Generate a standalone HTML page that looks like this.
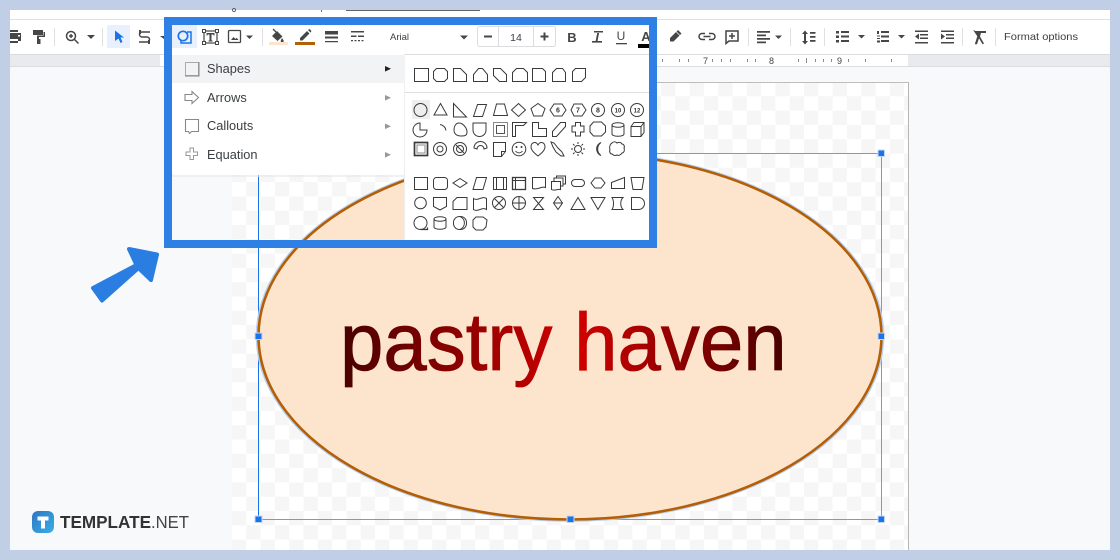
<!DOCTYPE html>
<html><head><meta charset="utf-8"><style>
html,body{margin:0;padding:0;width:1120px;height:560px;overflow:hidden;background:#c0cfe5}
svg{position:absolute;left:0;top:0;display:block}
text{font-family:"Liberation Sans",Arial,sans-serif}
.i{fill:none;stroke:#444746;stroke-width:1.5}
.f{fill:#444746;stroke:none}
.s{fill:none;stroke:#3a3a3a;stroke-width:1}
g.s{filter:blur(.3px)}
.d{stroke:#e0e0e0;stroke-width:1}
.m{font-size:12.8px;fill:#3c4043}
#wm{position:absolute;left:340px;top:293px;width:450px;height:100px;line-height:100px;font-family:"Liberation Sans",Arial,sans-serif;font-size:78px;white-space:nowrap;color:transparent;-webkit-text-stroke:.8px transparent;background:linear-gradient(90deg,#480000 0,#d20000 236px,#480000 447px);-webkit-background-clip:text;background-clip:text;transform-origin:0 77px;transform:scaleY(1.05)}
</style></head><body>
<svg width="1120" height="560" viewBox="0 0 1120 560" xmlns="http://www.w3.org/2000/svg">
<defs>
<pattern id="ck" x="232" y="82" width="28.6" height="28.6" patternUnits="userSpaceOnUse">
<rect width="28.6" height="28.6" fill="#fff"/>
<rect x="0" y="0" width="14.3" height="14.3" fill="#f6f6f6"/>
<rect x="14.3" y="14.3" width="14.3" height="14.3" fill="#f6f6f6"/>
</pattern>
<linearGradient id="lg" x1="0" y1="0" x2="1" y2="1"><stop offset="0" stop-color="#2f76c2"/><stop offset="1" stop-color="#38aee6"/></linearGradient>
</defs>
<rect x="0" y="0" width="1120" height="560" fill="#c0cfe5"/>
<rect x="10" y="10" width="1100" height="540" fill="#f8f9fb"/>
<!-- toolbar -->
<rect x="10" y="10" width="1100" height="44" fill="#fff"/>
<rect x="10" y="19" width="1100" height="1" fill="#e0e0e0"/>
<rect x="10" y="54" width="1100" height="1" fill="#dadce0"/>
<rect x="346" y="10" width="134" height="1" fill="#666"/>
<circle cx="234" cy="10" r="1.6" fill="none" stroke="#666"/><rect x="321" y="10" width="1" height="2" fill="#b45f06"/>
<rect x="10" y="55" width="1100" height="11" fill="#e8eaed"/>
<rect x="160" y="55" width="748" height="11" fill="#fff"/>
<rect x="10" y="66" width="1100" height="1" fill="#dadce0"/>
<g fill="#888"><rect x="662" y="59" width="1" height="3"/><rect x="679" y="59" width="1" height="3"/><rect x="688" y="59" width="1" height="3"/>
<rect x="712" y="59" width="1" height="3"/><rect x="721" y="59" width="1" height="3"/><rect x="730" y="59" width="1" height="3"/><rect x="747" y="59" width="1" height="3"/><rect x="755" y="59" width="1" height="3"/>
<rect x="798" y="59" width="1" height="3"/><rect x="806" y="58" width="1" height="5"/><rect x="815" y="59" width="1" height="3"/><rect x="823" y="59" width="1" height="3"/><rect x="831" y="59" width="1" height="3"/>
<rect x="848" y="59" width="1" height="3"/><rect x="865" y="59" width="1" height="3"/><rect x="891" y="59" width="1" height="3"/></g>
<g font-size="9" fill="#444"><text x="703" y="64">7</text><text x="769" y="64">8</text><text x="837" y="64">9</text></g>
<!-- canvas -->
<rect x="232" y="82" width="676" height="468" fill="url(#ck)"/>
<rect x="232" y="82" width="677" height="1" fill="#bdbdbd"/>
<rect x="908" y="82" width="1" height="468" fill="#b5b5b5"/>
<!-- selection -->
<rect x="258.5" y="153.5" width="623" height="366" fill="none" stroke="#6f9be0" stroke-width="1"/>
<rect x="258" y="153" width="1" height="367" fill="#1a73e8"/>
<ellipse cx="570" cy="336" rx="313" ry="184.5" fill="none" stroke="#b7cff2" stroke-width="2.5"/>
<ellipse cx="570" cy="336" rx="311.5" ry="183.5" fill="#fde4cd" stroke="#b45f06" stroke-width="2.6"/>
<g fill="#1a73e8" stroke="#c4d8f6" stroke-width="1">
<rect x="878" y="150" width="6.5" height="6.5"/><rect x="255" y="333" width="7" height="6.5"/><rect x="878" y="333" width="6.5" height="6.5"/>
<rect x="255" y="516" width="7" height="6.5"/><rect x="567" y="516" width="7" height="6.5"/><rect x="878" y="516" width="6.5" height="6.5"/></g>
<!-- toolbar left icons -->
<g>
<path class="f" d="M10 33h11v8h-3v-2h-8zM10 30h8v2h-8zM10 41h8v2h-8z"/><rect x="18" y="35" width="2" height="1.5" fill="#fff"/>
<path class="f" d="M33 30h10v5h-10zM43.500 32h1.500v5h-6v2h1.500v5h-3.500v-8.500h6.500z"/>
<rect x="54" y="28" width="1" height="18" fill="#e0e0e0"/>
<circle cx="71" cy="36" r="4.500" class="i"/><path class="i" d="M74.500 39.500l4 4M69 36h4M71 34v4" stroke-width="1.200"/>
<path class="f" d="M87 35h8l-4 4z"/>
<rect x="102" y="28" width="1" height="18" fill="#e0e0e0"/>
<rect x="107" y="25" width="23" height="23" rx="1" fill="#e8f0fe"/>
<path d="M115 30.500l9 7h-3.500l2 4.500-2 1-2-4.500-3.500 2.500z" fill="#1a73e8"/>
<path class="i" d="M150 32h-8a2.500 2.500 0 0 0 0 5h5a2.500 2.500 0 0 1 0 5h-8" stroke-width="1.700"/><path class="f" d="M139 30h2v4h-2zM148 40h2v4h-2z"/>
<path class="f" d="M160 36h4v3z"/>
</g>
<!-- right toolbar icons -->
<path class="f" d="M670 38l6-6 3.500 3.500-6 6h-3.500zM676.500 31.500l1.500-1.500 3.500 3.500-1.500 1.500z"/>
<path class="i" d="M705 33.500h-3a3 3 0 0 0 0 6h3M709 33.500h3a3 3 0 0 1 0 6h-3M703.500 36.500h7" transform="translate(0,0)"/>
<path class="i" d="M726 31h12v10h-9l-3 2.500z" stroke-width="1.100"/><path class="i" d="M729 36h6M732 33v6" stroke-width="1"/>
<rect x="748" y="28" width="1" height="18" fill="#e0e0e0"/>
<path class="f" d="M757 31h13v1.700h-13zM757 34.500h9v1.700h-9zM757 38h13v1.700h-13zM757 41.500h9v1.700h-9z"/><path class="f" d="M775 35.500h7l-3.500 3.500z"/>
<rect x="790" y="28" width="1" height="18" fill="#e0e0e0"/>
<path class="f" d="M805 30.500l3 3.500h-2v7h2l-3 3.500-3-3.500h2v-7h-2zM810 32h5.500v1.700h-5.500zM810 36h5.500v1.700h-5.500zM810 40h5.500v1.700h-5.500z"/>
<rect x="824" y="28" width="1" height="18" fill="#e0e0e0"/>
<path class="f" d="M836 31h3v2.500h-3zM836 35.500h3v2.500h-3zM836 40h3v2.500h-3zM841 31h8v2h-8zM841 35.500h8v2h-8zM841 40h8v2h-8z"/><path class="f" d="M858 35h7l-3.500 3.500z"/>
<path class="f" d="M877 31h2v3h-2zM877 35.500h3v1h-3zM877 38h3v1h-3zM877 40.500h3v2h-3zM881 31h8v2h-8zM881 35.500h8v2h-8zM881 40h8v2h-8z"/><path class="f" d="M898 35h7l-3.500 3.500z"/>
<path class="f" d="M915 30.500h13v1.500h-13zM920 34h8v1.500h-8zM920 37.500h8v1.500h-8zM915 42h13v1.500h-13zM919 33.500v6l-4-3z"/>
<path class="f" d="M941 30.500h13v1.500h-13zM946 34h8v1.500h-8zM946 37.500h8v1.500h-8zM941 42h13v1.500h-13zM941 33.500v6l4-3z"/>
<rect x="962" y="28" width="1" height="18" fill="#e0e0e0"/>
<path class="f" d="M974 31h12v2h-5l-1 3.500 4 7-1.500 .8-3.500-6-2 6h-2.200l2.500-8-4-6h2z"/>
<rect x="995" y="28" width="1" height="18" fill="#e0e0e0"/>
<text x="1004" y="40" font-size="10.500" fill="#3c4043" textLength="74" lengthAdjust="spacingAndGlyphs">Format options</text>
<!-- arrow -->
<path d="M129 249L157 254.500L151 280L138.500 268L102 300.500L93 288L136.500 265Z" fill="#2a7de1" stroke="#2a7de1" stroke-width="4" stroke-linejoin="round"/>
<!-- frame interior -->
<rect x="172" y="25" width="477" height="23" fill="#fff"/>
<rect x="405" y="54" width="244" height="186" fill="#fff"/>
<rect x="405" y="54" width="244" height="1" fill="#dadce0"/>
<rect x="405" y="92" width="244" height="1" fill="#e0e0e0"/>
<rect x="172" y="48" width="233" height="128" fill="#e6e7ea" opacity=".6" transform="translate(0,1)"/>
<rect x="172" y="48" width="233" height="127" rx="3" fill="#fff"/>
<rect x="404" y="54" width="1" height="186" fill="#eee"/>
<rect x="172" y="55" width="233" height="28" fill="#f1f3f4"/>
<rect x="172" y="25" width="25" height="23" fill="#e8f0fe"/>
<!-- frame toolbar icons -->
<circle cx="183" cy="36" r="4.700" fill="none" stroke="#1a73e8" stroke-width="1.700"/><path d="M187 32h4v11h-10v-3" fill="none" stroke="#1a73e8" stroke-width="1.500"/>
<rect x="204" y="31" width="13" height="12" fill="none" stroke="#444746" stroke-width="1.200"/>
<g fill="#fff" stroke="#444746"><rect x="202.500" y="29.500" width="3" height="3"/><rect x="215.500" y="29.500" width="3" height="3"/><rect x="202.500" y="41.500" width="3" height="3"/><rect x="215.500" y="41.500" width="3" height="3"/></g>
<path class="f" d="M206.500 33h8v2.500h-1v-1h-2v6h1v1h-4v-1h1v-6h-2v1h-1z"/>
<rect x="228.500" y="30.500" width="12" height="12" rx="1" fill="none" stroke="#444746" stroke-width="1.300"/><path class="f" d="M231 40l2.500-3 2 2 1.200-1.300 1.800 2.300z"/>
<path class="f" d="M246 35.500h7l-3.500 3.500z"/>
<rect x="262" y="28" width="1" height="18" fill="#e0e0e0"/>
<path class="f" d="M277 31l5.500 5.500-5 4.500-5.500-5zM282 38c1 1.500 1.700 2.300 1.700 3a1.500 1.500 0 0 1-3 0c0-.7 .6-1.500 1.300-3z"/><path d="M273 29l3 3" stroke="#444746" stroke-width="1.300"/>
<rect x="269" y="42" width="19" height="3" fill="#fce5cd"/>
<path class="f" d="M300 38l7-7 2.500 2.500-7 7h-2.500zM308 30l1.500-1 2 2-1 1.500z"/>
<rect x="295" y="42" width="20" height="3" fill="#b45f06"/>
<path class="f" d="M325 31h13v3.500h-13zM325 36.500h13v2h-13zM325 41h13v1.200h-13z"/>
<path class="f" d="M351 31h13v1.500h-13zM351 35.500h5.500v1.500h-5.500zM358 35.500h6v1.500h-6zM351 40h2v1.200h-2zM354.500 40h2v1.200h-2zM358 40h2v1.200h-2zM361.500 40h2v1.200h-2z"/>
<text x="390" y="40" font-size="9.500" fill="#3c4043">Arial</text>
<path class="f" d="M460 35.500h8l-4 4z"/>
<rect x="477.500" y="26.500" width="78" height="20" rx="2" fill="#fff" stroke="#dadce0"/>
<rect x="498" y="27" width="1" height="19" fill="#dadce0"/><rect x="533" y="27" width="1" height="19" fill="#dadce0"/>
<rect x="484" y="35.500" width="8" height="2" fill="#444746"/><path class="f" d="M540.500 35.500h3v-3h2v3h3v2h-3v3h-2v-3h-3z"/>
<text x="516" y="41" font-size="10.500" fill="#3c4043" text-anchor="middle">14</text>
<text x="572" y="42" font-size="13" font-weight="bold" fill="#444746" text-anchor="middle">B</text>
<text x="597" y="42" font-size="13" font-weight="bold" font-style="italic" fill="#444746" text-anchor="middle">I</text>
<path class="f" d="M592 41h10v1.600h-10zM594 31h9v1.500h-9z"/>
<text x="621" y="40" font-size="12" fill="#444746" text-anchor="middle">U</text><rect x="616" y="43" width="11" height="1.300" fill="#444746"/>
<text x="646" y="41" font-size="13" font-weight="bold" fill="#444746" text-anchor="middle">A</text>
<rect x="638" y="44" width="11" height="4" fill="#000"/>
<!-- menu -->
<rect x="185.500" y="62.500" width="13" height="13" fill="none" stroke="#aaa" stroke-width="1"/><path d="M185 76h14V62" fill="none" stroke="#888"/>
<text class="m" x="207" y="73">Shapes</text>
<path d="M185 94.500h7v-3l6.500 6-6.500 6v-3h-7z" fill="none" stroke="#888" stroke-width="1.100"/>
<text class="m" x="207" y="102">Arrows</text>
<path d="M185.500 119.500h13v12h-7l-2 2-1-2h-3z" fill="none" stroke="#888" stroke-width="1.100"/>
<text class="m" x="207" y="130">Callouts</text>
<path d="M190 148h3.500v4h4v3.500h-4v4h-3.500v-4h-4v-3.500h4z" fill="none" stroke="#999" stroke-width="1"/>
<text class="m" x="207" y="159">Equation</text>
<path d="M385 66l6 2.800-6 2.800z" fill="#222"/>
<path d="M385 95l6 2.800-6 2.800zM385 123.500l6 2.800-6 2.800zM385 152l6 2.800-6 2.800z" fill="#999"/>
<!-- shape row 1 -->
<g class="s">
<path d="M414.500 68.500h14v13h-14z"/>
<path d="M436.500 68.500h8l3 3v7l-3 3h-8l-3-3v-7z" transform="translate(0,0)"/>
<path d="M453.500 68.500h7l6 6v7h-13z"/>
<path d="M473.500 81.500v-7l5-6h4l5 6v7z"/>
<path d="M493.500 68.500h7l6 6v7h-7l-6-6z"/>
<path d="M512.500 81.500v-9l4-4h7l4 4v9z"/>
<path d="M532.500 68.500h10l3 3v10h-13z"/>
<path d="M552.500 81.500v-9l4-4h6l3 4v9z"/>
<path d="M572.500 71.500l3-3h10v9l-4 4h-9z"/>
</g>
<rect x="412" y="100" width="18" height="19" fill="#eee"/>
<!-- shape row 2 -->
<g class="s">
<circle cx="420.500" cy="110" r="6.500"/>
<path d="M440.500 103.500l6.500 11.500h-13z"/>
<path d="M453.500 103.500l13 13.500h-13z"/>
<path d="M477.500 104.500h9l-4 12h-9z"/>
<path d="M496.500 104h8l3 11.500h-14z"/>
<path d="M518.500 103.500l7 6.500-7 6.500-7-6.500z"/>
<path d="M538 103.500l7 5-2.700 7.500h-8.600l-2.700-7.500z"/>
<path d="M554 104h8l4 6-4 6h-8l-4-6z" transform="translate(0,0)"/>
<path d="M574 104h8l4 6-4 6h-8l-3-6z"/>
<circle cx="598" cy="110" r="6.500"/>
<circle cx="618" cy="110" r="6.500"/>
<circle cx="637" cy="110" r="6.500"/>
</g>
<g font-size="7" font-weight="bold" fill="#333" text-anchor="middle"><text x="558" y="112.500">6</text><text x="578" y="112.500">7</text><text x="598" y="112.500">8</text><text x="618" y="112.500" font-size="6">10</text><text x="637" y="112.500" font-size="6">12</text></g>
<!-- shape row 3 -->
<g class="s">
<path d="M420 123a7 7 0 1 0 7 7h-7z"/>
<path d="M440 124.500a7 7 0 0 1 6 6"/>
<path d="M459 123c4 0 8 5 8 9s-3 4-6 4c-4 0-7-2-7-6s2-7 5-7z"/>
<path d="M486 123v7a6.500 6.500 0 0 1-6.500 6.500a6.500 6.500 0 0 1-6.500-6.500v-7z" transform="translate(0,0)"/>
<rect x="493.500" y="122.500" width="14" height="14" stroke="#888"/><rect x="496.500" y="125.500" width="8" height="8" stroke="#555"/>
<path d="M512.500 136.500v-14h14l-3 3h-8v11z"/>
<path d="M532.500 122.500h6v6h8v8h-14z"/>
<path d="M552.500 136.500v-5l8-9h5v4l-9 10z"/>
<path d="M575.500 122.500h5v3.500h3.500v6h-3.500v4h-5v-4h-3.500v-6h3.500z"/>
<path d="M594 123h8l4 4v6l-4 4h-8l-3.500-4v-6z" transform="translate(-.5,-1)"/>
<path d="M612 125c0-3 12-3 12 0v9c0 3-12 3-12 0zM612 125c0 3 12 3 12 0"/>
<path d="M631 126.500l3-4h10v10l-3 4h-10zM631 126.500h10v10M641 126.500l3-4"/>
</g>
<!-- shape row 4 -->
<g class="s">
<rect x="414.500" y="142.500" width="13" height="13" stroke-width="1.700"/><rect x="417" y="145" width="8" height="8" stroke="#888"/>
<circle cx="440" cy="149" r="6.500"/><circle cx="440" cy="149" r="3"/>
<circle cx="460" cy="149" r="6.500"/><circle cx="460" cy="149" r="3.500"/><path d="M456 145l8 8"/>
<path d="M474 148a6.500 6.500 0 0 1 13 0l-3 1a3.500 3.500 0 0 0-7 0z"/>
<path d="M493.500 142.500h12v9l-4 5h-8zM505.500 151.500h-4v5"/>
<circle cx="519" cy="149" r="6.800"/><circle cx="516.500" cy="147" r=".5"/><circle cx="521.500" cy="147" r=".5"/><path d="M515.500 151c2 2.500 5 2.500 7 0"/>
<path d="M538 156c-4-3-7-6-7-9 0-5 5-6 7-2 2-4 7-3 7 2 0 3-3 6-7 9z"/>
<path d="M551 142l3 1 4 5 4 4 2 4-3 0-5-4-3-5z"/>
<circle cx="578" cy="149" r="3.500"/><path d="M578 142v2M578 154v2M571 149h2M583 149h2M573 144l1.500 1.500M581.500 152.500l1.500 1.500M573 154l1.500-1.500M581.500 145.500l1.500-1.500"/>
<path d="M601 142.500a7 7 0 0 0 0 13a8 8 0 0 1 0-13z"/>
<path d="M612 143c2-2 4-1 5 0 2-1 4-1 5 1 2 0 3 3 2 4 1 2 0 5-2 5-1 2-4 3-5 2-2 1-4 0-5-1-2 0-3-3-2-4-1-3 0-6 2-7z" stroke-dasharray="0"/>
</g>
<!-- shape row 5 -->
<g class="s">
<rect x="414.500" y="177.500" width="13" height="12"/>
<rect x="433.500" y="177.500" width="14" height="12" rx="3"/>
<path d="M460 178.500l7 4.500-7 4.500-7-4.500z" transform="translate(0,0)"/>
<path d="M476.500 177.500h10l-3.500 12h-10z"/>
<rect x="493.500" y="177.500" width="13" height="12"/><path d="M496.500 177.500v12M503.500 177.500v12"/>
<rect x="512.500" y="177.500" width="13" height="12" stroke-width="1.300"/><path d="M515.500 177.500v12M512.500 180.500h13"/>
<path d="M532.500 177.500h13v10c-4-2-7 3-13 1z"/>
<path d="M551.500 181.500h9v8c-3-1-6 2-9 0zM554 181v-3h9v8h-2.500M556.500 178v-2h9v8h-2.500"/>
<rect x="571.500" y="179.500" width="13" height="7" rx="3.500"/>
<path d="M595 178h6l4 5-4 5h-6l-4-5z"/>
<path d="M611.500 188.500h13v-11l-13 5z"/>
<path d="M631 177.500h13l-2 12h-9z"/>
</g>
<!-- shape row 6 -->
<g class="s">
<circle cx="420.500" cy="203" r="5.800"/>
<path d="M433.500 197.500h13v9l-6.500 3.500-6.500-3.500z"/>
<path d="M457 197.500h10v12h-14v-8z"/>
<path d="M473.500 198.500c4 3 9-3 13 0v11c-4-3-9 3-13 0z"/>
<circle cx="499" cy="203" r="6.500"/><path d="M494.500 198.500l9 9M494.500 207.500l9-9"/>
<circle cx="519" cy="203" r="6.500"/><path d="M519 196.500v13M512.500 203h13"/>
<path d="M533.500 197.500h10l-10 12h10z"/>
<path d="M558 196.500l4.500 6.500-4.500 6.500-4.500-6.500zM553.500 203h9"/>
<path d="M578 197.500l7 12h-14z"/>
<path d="M591 197.500h14l-7 12z"/>
<path d="M612 197.500h11c-3 3-3 9 0 12h-11c2-3 2-9 0-12z"/>
<path d="M631.500 197.500h7a6 6 0 0 1 6 6a6 6 0 0 1-6 6h-7z"/>
</g>
<!-- shape row 7 -->
<g class="s">
<circle cx="420.500" cy="223" r="6.500"/><path d="M420.500 229.500h7v-2" stroke-width="1.300"/>
<path d="M434 219c0-3 12-3 12 0v8c0 3-12 3-12 0zM434 219c0 3 12 3 12 0"/>
<rect x="453.500" y="216.500" width="13" height="13" rx="6"/><path d="M460 216.500a7 7 0 0 1 0 13"/>
<path d="M476 217h7l4 3-1 7-3 3h-7l-3-3v-7z"/>
</g>
<!-- blue frame -->
<rect x="168" y="21" width="485" height="223" fill="none" stroke="#2f80e4" stroke-width="8"/>
<!-- logo -->
<rect x="32" y="511" width="22" height="22" rx="6" fill="url(#lg)"/>
<path d="M37.500 516.500h11v4h-3.500v8h-4v-8h-3.500z" fill="#fff"/>
<text x="60" y="528" font-size="17.500" font-weight="bold" fill="#333" textLength="91" lengthAdjust="spacingAndGlyphs">TEMPLATE</text>
<text x="151" y="528" font-size="17.500" fill="#444" textLength="38" lengthAdjust="spacingAndGlyphs">.NET</text>
</svg>
<div id="wm">pastry haven</div>
</body></html>
